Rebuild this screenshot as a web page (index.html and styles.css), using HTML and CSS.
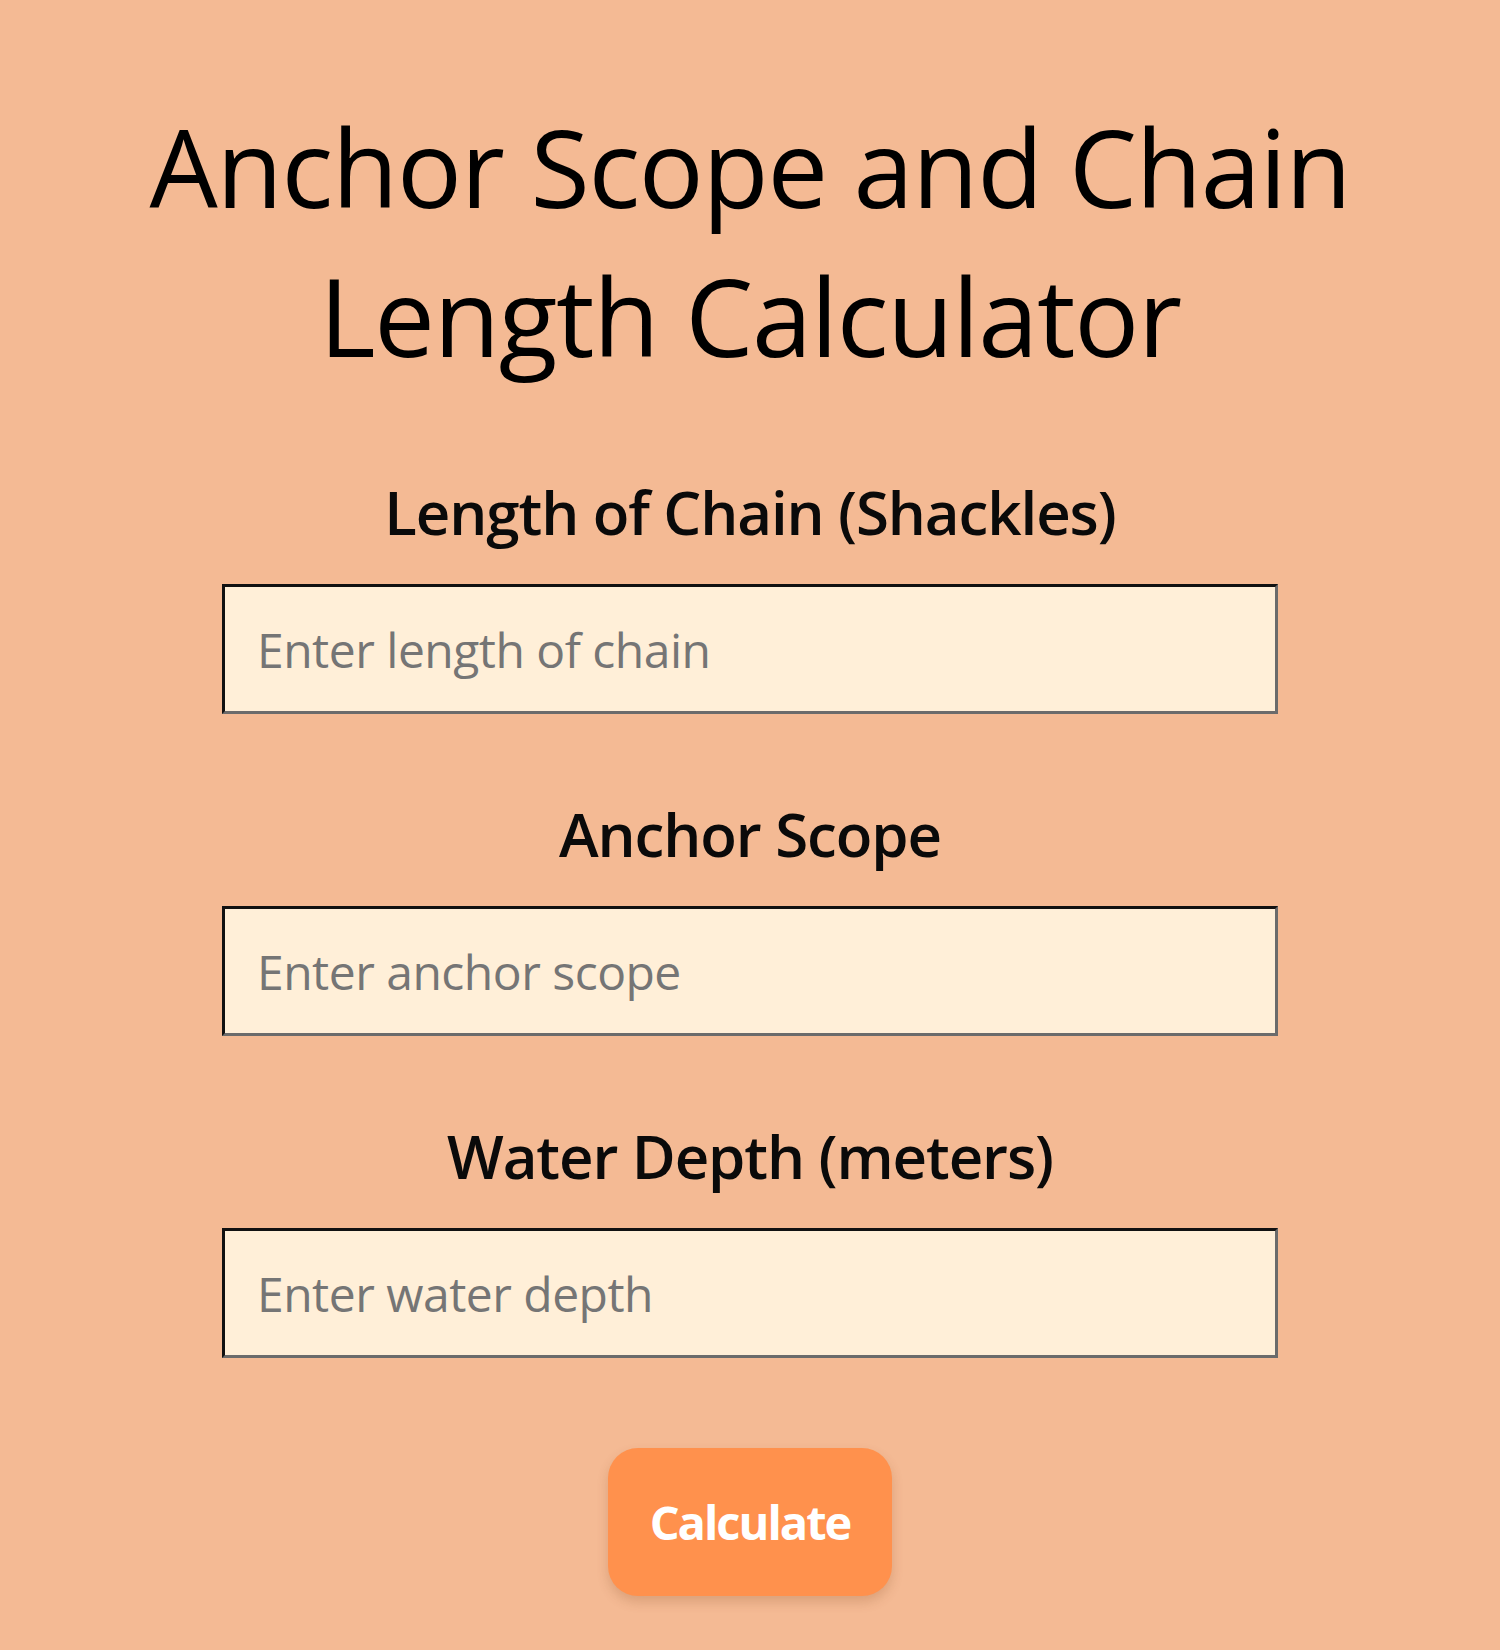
FILE: index.html
```html
<!DOCTYPE html>
<html lang="en">
<head>
<meta charset="utf-8">
<title>Anchor Scope and Chain Length Calculator</title>
<link rel="stylesheet" href="styles.css">
</head>
<body>
<main class="calculator">
  <h1 class="title">Anchor Scope and Chain Length Calculator</h1>
  <form class="form">
    <div class="field">
      <label class="label" for="chain">Length of Chain (Shackles)</label>
      <input class="input" id="chain" type="text" placeholder="Enter length of chain">
    </div>
    <div class="field">
      <label class="label" for="scope">Anchor Scope</label>
      <input class="input" id="scope" type="text" placeholder="Enter anchor scope">
    </div>
    <div class="field">
      <label class="label" for="depth">Water Depth (meters)</label>
      <input class="input" id="depth" type="text" placeholder="Enter water depth">
    </div>
    <button class="button" type="button">Calculate</button>
  </form>
</main>
</body>
</html>
```

FILE: styles.css
```css
html, body {
  margin: 0;
  padding: 0;
}

body {
  background: #f4ba94;
  font-family: "Open Sans", "Noto Sans", sans-serif;
  color: #000;
  min-height: 1650px;
}

.calculator {
  display: flex;
  flex-direction: column;
  align-items: center;
  padding-top: 92px;
}

.title {
  margin: 0;
  width: 1260px;
  font-size: 108px;
  line-height: 149px;
  font-weight: 400;
  letter-spacing: -1.25px;
  text-align: center;
}

.form {
  width: 1056px;
  display: flex;
  flex-direction: column;
  align-items: center;
  margin-top: 81px;
}

.field {
  width: 100%;
  display: flex;
  flex-direction: column;
  align-items: center;
  margin-bottom: 79px;
}

.field:last-of-type {
  margin-bottom: 90px;
}

.label {
  font-size: 60px;
  line-height: 82px;
  font-weight: 600;
  letter-spacing: -1.1px;
  color: #0a0a0a;
  margin-bottom: 31px;
}

.input {
  box-sizing: border-box;
  width: 100%;
  height: 130px;
  padding: 0 32px;
  font-family: inherit;
  font-size: 48px;
  letter-spacing: -0.5px;
  background: #ffefd8;
  border-style: solid;
  border-width: 3px;
  border-color: #111 #6b6b6b #6b6b6b #111;
  color: #000;
}

.input::placeholder {
  color: #757575;
}

.button {
  width: 284px;
  height: 148px;
  border: 0;
  border-radius: 30px;
  background: #ff914d;
  color: #fff;
  font-family: inherit;
  font-size: 47px;
  font-weight: 700;
  letter-spacing: -2px;
  box-shadow: 0 6px 12px rgba(120, 60, 20, 0.2);
}
```
